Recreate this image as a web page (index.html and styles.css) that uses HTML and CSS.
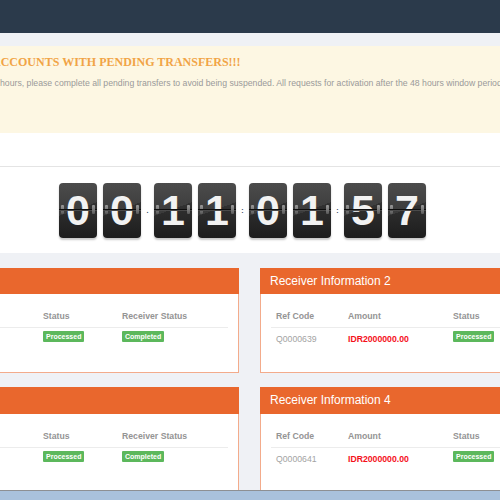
FILE: index.html
```html
<!DOCTYPE html>
<html>
<head>
<meta charset="utf-8">
<link rel="stylesheet" href="styles.css">
</head>
<body>
<header class="navbar"></header>
<div class="gap-strip"></div>
<section class="alert">
  <h4 class="alert-title">ACCOUNTS WITH PENDING TRANSFERS!!!</h4>
  <p class="alert-text">hours, please complete all pending transfers to avoid being suspended. All requests for activation after the 48 hours window period will</p>
</section>
<div class="blank"></div>
<section class="countdown">
  <div class="tile"><span class="digit">0</span><span class="split"></span></div>
  <div class="tile"><span class="digit">0</span><span class="split"></span></div>
  <div class="sep">.</div>
  <div class="tile"><span class="digit">1</span><span class="split"></span></div>
  <div class="tile"><span class="digit">1</span><span class="split"></span></div>
  <div class="sep">:</div>
  <div class="tile"><span class="digit">0</span><span class="split"></span></div>
  <div class="tile"><span class="digit">1</span><span class="split"></span></div>
  <div class="sep">:</div>
  <div class="tile"><span class="digit">5</span><span class="split"></span></div>
  <div class="tile"><span class="digit">7</span><span class="split"></span></div>
</section>
<main class="cards">
  <div class="card">
    <div class="card-head">Receiver Information 1</div>
    <div class="card-body">
      <table class="tbl">
        <thead><tr><th class="c1">Ref Code</th><th class="c2">Amount</th><th class="c3">Status</th><th>Receiver Status</th></tr></thead>
        <tbody><tr><td>Q0000638</td><td class="amt">IDR2000000.00</td><td><span class="badge">Processed</span></td><td><span class="badge">Completed</span></td></tr></tbody>
      </table>
    </div>
  </div>
  <div class="card">
    <div class="card-head">Receiver Information 2</div>
    <div class="card-body">
      <table class="tbl">
        <thead><tr><th class="c1">Ref Code</th><th class="c2">Amount</th><th class="c3">Status</th><th>Receiver Status</th></tr></thead>
        <tbody><tr><td>Q0000639</td><td class="amt">IDR2000000.00</td><td><span class="badge">Processed</span></td><td><span class="badge">Completed</span></td></tr></tbody>
      </table>
    </div>
  </div>
  <div class="card">
    <div class="card-head tall">Receiver Information 3</div>
    <div class="card-body">
      <table class="tbl">
        <thead><tr><th class="c1">Ref Code</th><th class="c2">Amount</th><th class="c3">Status</th><th>Receiver Status</th></tr></thead>
        <tbody><tr><td>Q0000640</td><td class="amt">IDR2000000.00</td><td><span class="badge">Processed</span></td><td><span class="badge">Completed</span></td></tr></tbody>
      </table>
    </div>
  </div>
  <div class="card">
    <div class="card-head tall">Receiver Information 4</div>
    <div class="card-body">
      <table class="tbl">
        <thead><tr><th class="c1">Ref Code</th><th class="c2">Amount</th><th class="c3">Status</th><th>Receiver Status</th></tr></thead>
        <tbody><tr><td>Q0000641</td><td class="amt">IDR2000000.00</td><td><span class="badge">Processed</span></td><td><span class="badge">Completed</span></td></tr></tbody>
      </table>
    </div>
  </div>
</main>
<footer class="footer"></footer>
</body>
</html>
```
FILE: styles.css
```css
html, body {
  margin: 0;
  padding: 0;
  overflow: hidden;
  height: 100%;
}
body {
  background: #eff1f5;
  font-family: "Liberation Sans", Arial, sans-serif;
}
.navbar {
  height: 33px;
  background: #2b3a4b;
}
.gap-strip {
  height: 13px;
  background: #eff1f5;
}
.alert {
  height: 87px;
  box-sizing: border-box;
  background: #fdf7e3;
  padding-top: 8px;
  white-space: nowrap;
}
.alert-title {
  margin: 0 0 0 -8px;
  font-family: "Liberation Serif", "Times New Roman", serif;
  font-weight: bold;
  font-size: 12px;
  line-height: 16px;
  color: #f1a446;
}
.alert-text {
  margin: 7px 0 0 0;
  font-size: 8.7px;
  line-height: 13px;
  color: #9a9a9a;
}
.blank {
  height: 33px;
  background: #fff;
  border-bottom: 1px solid #e4e4e4;
}
.countdown {
  height: 86px;
  box-sizing: border-box;
  background: #fff;
  padding: 16px 0 0 59px;
  display: flex;
  align-items: flex-start;
}
.tile {
  position: relative;
  width: 38px;
  height: 55px;
  margin-right: 6px;
  border-radius: 4px;
  background:
    linear-gradient(160deg, rgba(255,255,255,0.07) 0 48%, rgba(255,255,255,0) 48%),
    linear-gradient(#3e3e3e, #1d1d1d);
  box-shadow: 0 2px 2px rgba(0,0,0,0.22);
  display: flex;
  justify-content: center;
}
.tile::before,
.tile::after {
  content: "";
  position: absolute;
  top: 22px;
  width: 3px;
  height: 9px;
  border-radius: 1px;
  background: linear-gradient(#9a9a9a, #5a5a5a);
}
.tile::before { left: 2px; }
.tile::after { right: 2px; }
.digit {
  font-family: "Liberation Sans", Arial, sans-serif;
  font-weight: bold;
  font-size: 43px;
  line-height: 43px;
  margin-top: 6px;
  color: #f2f2f2;
}
.split {
  position: absolute;
  left: 0;
  right: 0;
  top: 26px;
  height: 1px;
  background: #0d0d0d;
  border-bottom: 1px solid #4a4a4a;
}
.sep {
  width: 13px;
  margin-left: -6px;
  text-align: center;
  font-size: 7px;
  font-weight: bold;
  line-height: 8px;
  padding-top: 24px;
  color: #33465c;
}
.cards {
  display: grid;
  grid-template-columns: 389px 388px;
  column-gap: 21px;
  row-gap: 14px;
  margin: 15px 0 0 -150px;
  width: 798px;
}
.card {
  background: #fff;
}
.card-head {
  height: 26px;
  line-height: 26px;
  padding-left: 10px;
  background: #e9672d;
  color: #fff;
  font-size: 12px;
}
.card-head.tall {
  height: 27px;
  line-height: 27px;
}
.card-body {
  border: 1px solid #f3ab8b;
  border-top: 0;
  padding: 10px 10px 19px;
}
.tbl {
  width: 100%;
  border-collapse: collapse;
  table-layout: fixed;
  font-size: 8.7px;
}
.tbl th {
  text-align: left;
  font-weight: bold;
  color: #949494;
  line-height: 12px;
  padding: 5.5px 5px;
  border-bottom: 1px solid #ececec;
}
.tbl .c1 { width: 62px; }
.tbl .c2 { width: 95px; }
.tbl .c3 { width: 69px; }
.tbl td {
  color: #a3a3a3;
  line-height: 13px;
  padding: 5px 5px 7px;
  vertical-align: top;
}
.tbl td.amt {
  color: #f5101a;
  font-weight: bold;
}
.badge {
  display: inline-block;
  vertical-align: top;
  margin-top: -2px;
  height: 11px;
  line-height: 11px;
  padding: 0 3px;
  border-radius: 1px;
  background: #5cb85c;
  color: #fff;
  font-weight: bold;
  font-size: 7px;
}
.footer {
  position: fixed;
  left: 0;
  right: 0;
  bottom: 0;
  height: 9px;
  background: #a9c1dc;
  border-top: 1px solid #8d8f93;
}
```
